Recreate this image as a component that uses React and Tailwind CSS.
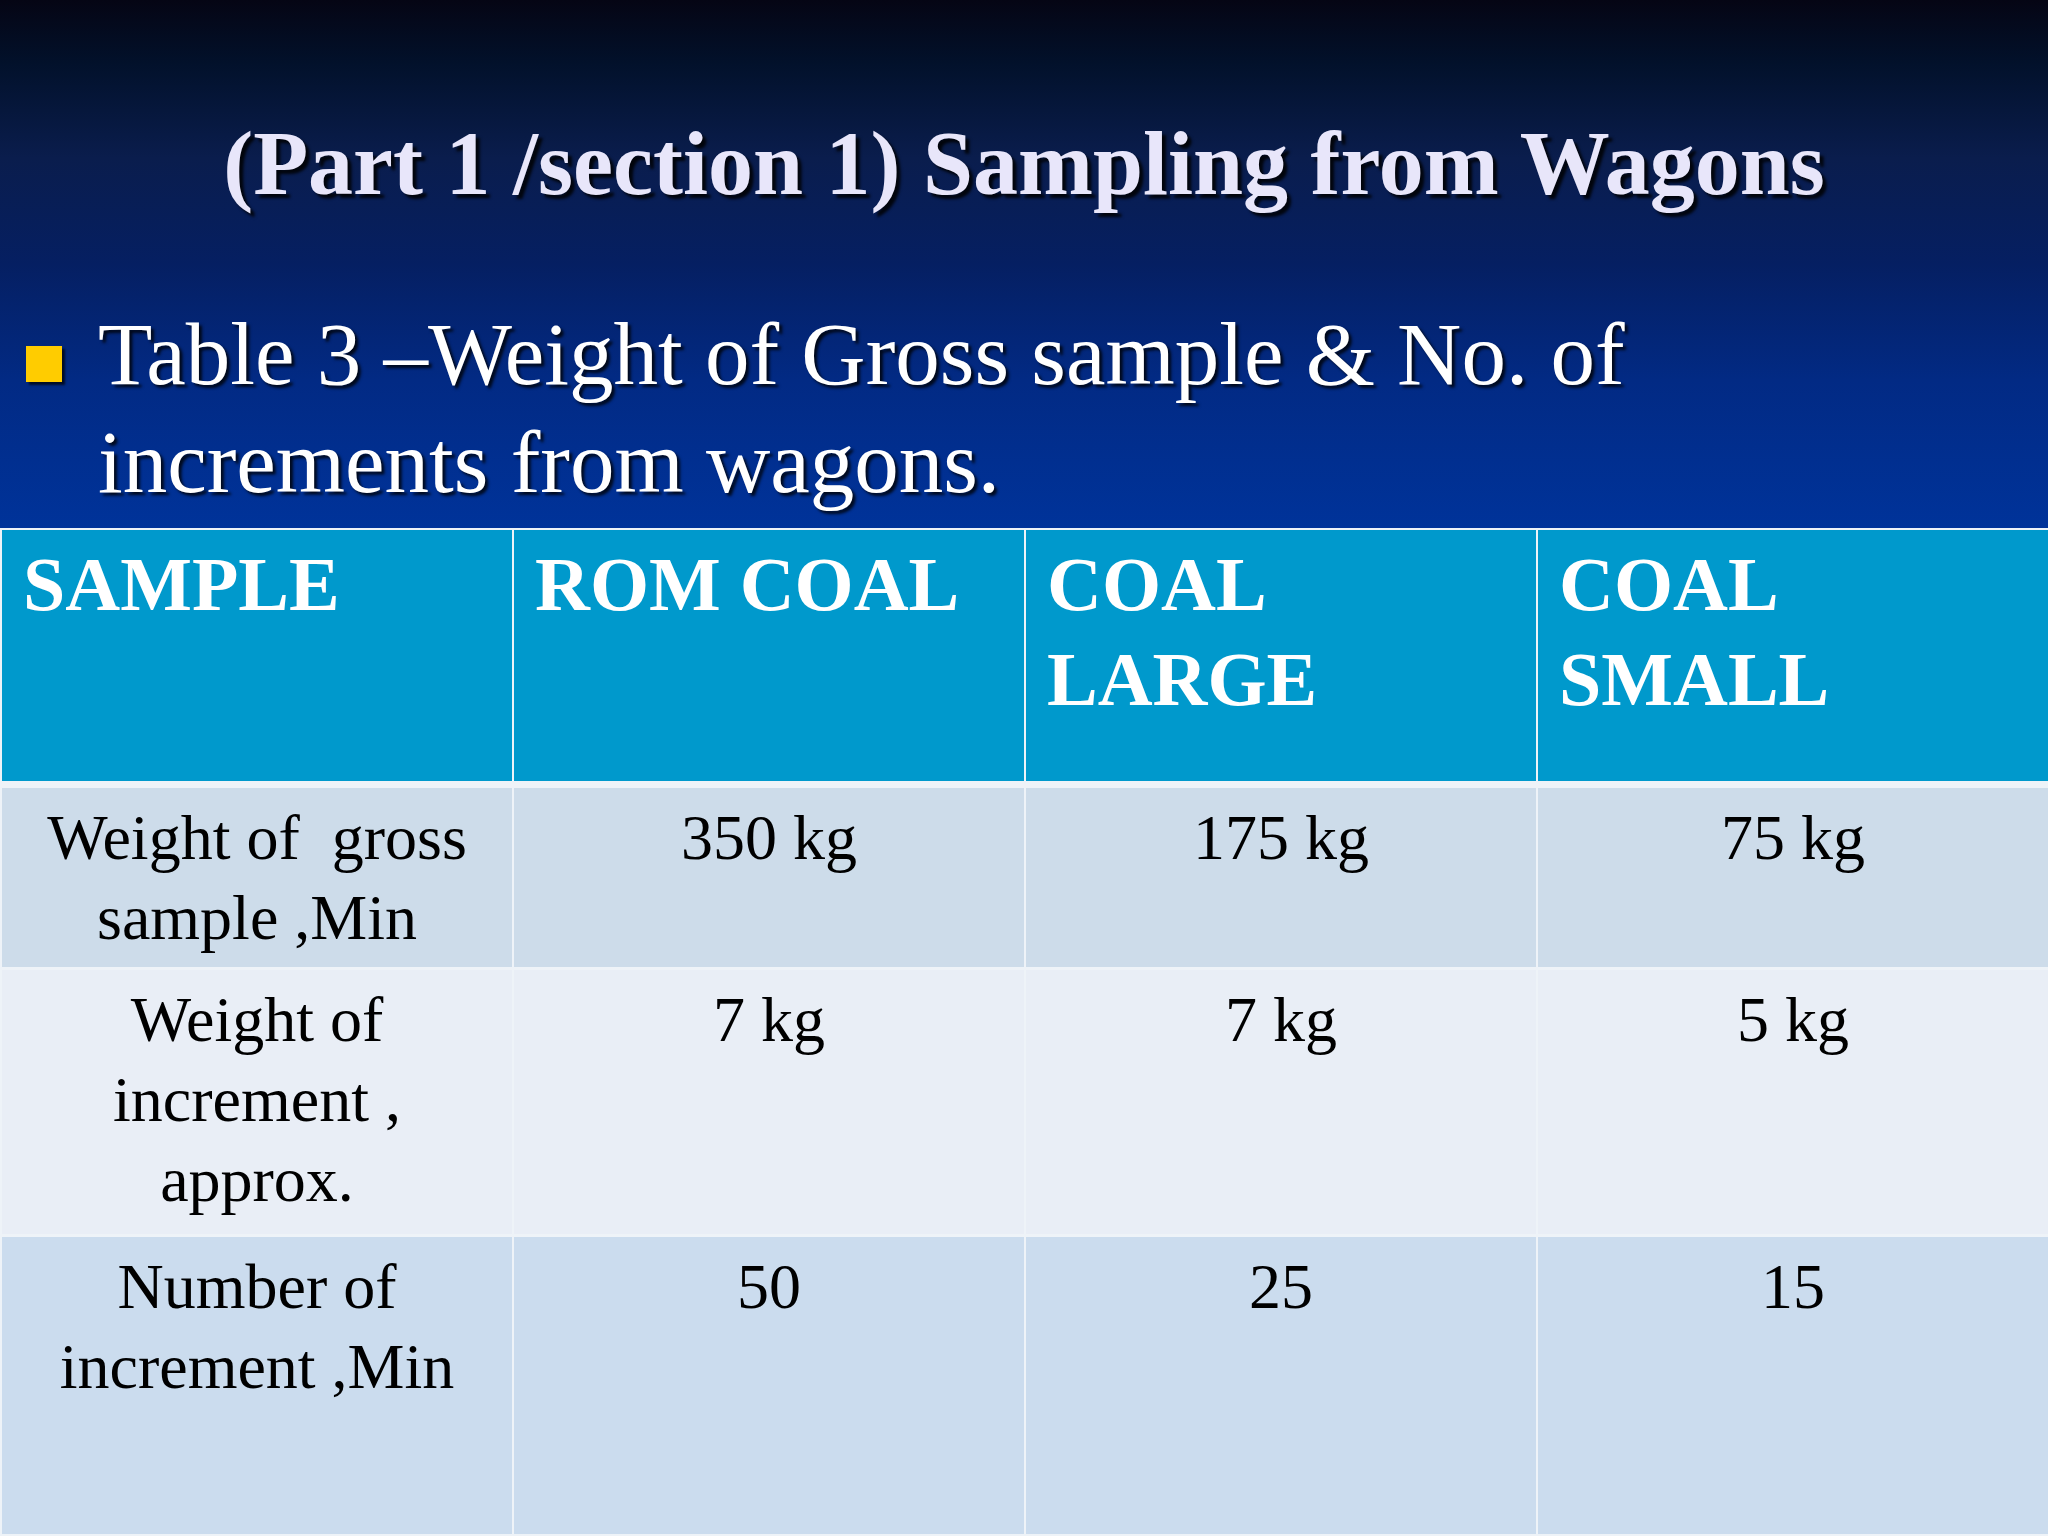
const rows = [
  { bg: "bg-[#cddcea]", h: "h-[179px]", label: ["Weight of\u00a0 gross", "sample ,Min"], vals: ["350 kg", "175 kg", "75 kg"] },
  { bg: "bg-[#e9eef6]", h: "h-[264px]", label: ["Weight of", "increment ,", "approx."], vals: ["7 kg", "7 kg", "5 kg"] },
  { bg: "bg-[#cbdcee]", h: "h-[297px]", label: ["Number of", "increment ,Min"], vals: ["50", "25", "15"] },
];

const headers = [["SAMPLE"], ["ROM COAL"], ["COAL", "LARGE"], ["COAL", "SMALL"]];

const serif = "font-['Liberation_Serif','Times_New_Roman',serif]";

const Lines = ({ lines }) =>
  lines.map((l, i) => (
    <span key={i} className="block whitespace-nowrap">
      {l}
    </span>
  ));

export default function App() {
  return (
    <div className={`w-[2048px] h-[1536px] overflow-hidden flex flex-col ${serif}`}>
      <div className="h-[528px] bg-[linear-gradient(to_bottom,#050514_0%,#02112b_12%,#0a1d4d_30%,#051f62_50%,#022a84_72%,#00339a_100%)]">
        <h1 className="pt-[110px] text-center text-[90px] leading-[1.2] font-bold text-[#e8e6fa] [text-shadow:4px_4px_3px_rgba(0,0,0,0.85)]">
          (Part 1 /section 1) Sampling from Wagons
        </h1>
        <div className="flex items-start mt-[82px] pl-[26px]">
          <div className="mt-[46px] w-[36px] h-[36px] bg-[#ffcc00] shadow-[3px_3px_2px_rgba(0,0,0,0.7)]" />
          <p className="ml-[36px] text-[89px] leading-[108px] text-white [text-shadow:3px_3px_3px_rgba(0,0,0,0.8)]">
            Table 3 –Weight of Gross sample &amp; No. of
            <br />
            increments from wagons.
          </p>
        </div>
      </div>

      <div className="flex-1 flex flex-col bg-[#eef3f8] pt-[2px] pl-[2px] gap-[3px]">
        <div className="grid grid-cols-4 gap-[2px] h-[251px] mb-[4px]">
          {headers.map((h, i) => (
            <div key={i} className="bg-[#0099cc] pl-[21px] pt-[7px] text-[76px] leading-[95px] font-bold text-white">
              <Lines lines={h} />
            </div>
          ))}
        </div>
        {rows.map((r, ri) => (
          <div key={ri} className={`grid grid-cols-4 gap-[2px] ${r.h}`}>
            <div className={`${r.bg} pt-[10px] text-center text-[64px] leading-[80px] text-black`}>
              <Lines lines={r.label} />
            </div>
            {r.vals.map((v, vi) => (
              <div key={vi} className={`${r.bg} pt-[10px] text-center text-[64px] leading-[80px] text-black`}>
                {v}
              </div>
            ))}
          </div>
        ))}
      </div>
    </div>
  );
}
